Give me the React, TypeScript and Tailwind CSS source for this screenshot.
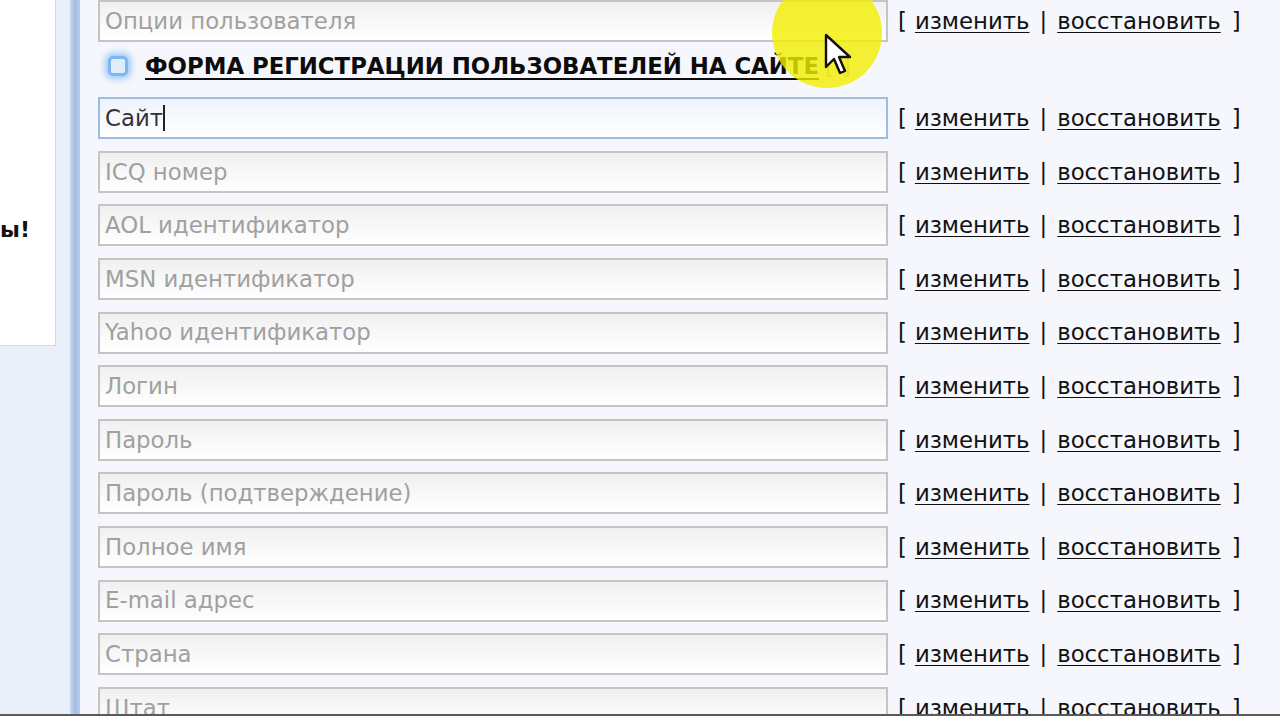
import React from 'react'

const fields = [
  'ICQ номер',
  'AOL идентификатор',
  'MSN идентификатор',
  'Yahoo идентификатор',
  'Логин',
  'Пароль',
  'Пароль (подтверждение)',
  'Полное имя',
  'E-mail адрес',
  'Страна',
  'Штат'
]

const font = { fontFamily: '"DejaVu Sans", Verdana, sans-serif' }

function Links() {
  return (
    <div className="ml-[10px] flex items-center text-[22.8px] text-[#111] whitespace-nowrap">
      <span>[</span>
      <a className="ml-[8px] underline decoration-1 underline-offset-[3px]">изменить</a>
      <span className="mx-[10px]">|</span>
      <a className="underline decoration-1 underline-offset-[3px]">восстановить</a>
      <span className="ml-[11px]">]</span>
    </div>
  )
}

function Field({ label, value, focused }: { label: string; value?: string; focused?: boolean }) {
  return (
    <div className="flex items-center h-[42px] shrink-0">
      <div
        className={
          focused
            ? 'w-[790px] h-[42px] border-2 border-[#9dbbe3] bg-gradient-to-b from-[#eef3fb] to-white flex items-center pl-[5px] text-[22.8px] text-[#333]'
            : 'w-[790px] h-[42px] border-2 border-[#c4c4c4] bg-gradient-to-b from-[#f0f0f0] to-white flex items-center pl-[5px] text-[22.8px] text-[#a0a0a0]'
        }
      >
        {value ? (
          <>
            <span>{value}</span>
            <span className="w-[2px] h-[26px] bg-[#222]" />
          </>
        ) : (
          <span>{label}</span>
        )}
      </div>
      <Links />
    </div>
  )
}

export default function App() {
  return (
    <div className="w-[1280px] h-[720px] overflow-hidden relative bg-white" style={font}>
      <div className="h-[716px] flex overflow-hidden border-b-2 border-[#5a5a5a]">
        <aside className="w-[70px] bg-[#e9f0fa] flex flex-col shrink-0">
          <div className="w-[56px] h-[346px] bg-white border-r border-b border-[#d3dae5] pt-[219px] text-[22px] font-bold text-[#111] leading-none whitespace-nowrap overflow-hidden">
            ы!
          </div>
        </aside>
        <div className="w-[10px] shrink-0 bg-gradient-to-r from-[#c9dbf1] via-[#9fbde3] to-[#b7cdea]" />
        <main className="flex-1 bg-[#f5f7fc] pl-[18px] flex flex-col gap-[11.6px]">
          <Field label="Опции пользователя" />
          <div className="h-[32px] flex items-center pl-[10px] pb-[8px] shrink-0">
            <span className="w-[20px] h-[20px] rounded-[5px] border-[3px] border-[#7fb6ef] bg-[#dfeefd] shadow-[0_0_6px_3px_rgba(120,180,245,0.7)]" />
            <span className="ml-[17px] text-[22.8px] font-bold text-[#0c0c0c] underline decoration-2 underline-offset-[4px] whitespace-nowrap">
              ФОРМА РЕГИСТРАЦИИ ПОЛЬЗОВАТЕЛЕЙ НА САЙТЕ
            </span>
            <span className="ml-[6px] text-[22.8px] text-[#b8b8b8]">[-]</span>
          </div>
          <Field label="Сайт" value="Сайт" focused />
          {fields.map(f => (
            <Field key={f} label={f} />
          ))}
        </main>
      </div>

      {/* cursor highlight */}
      <div className="absolute left-[772px] top-[-22px] w-[110px] h-[110px] rounded-full bg-[#f2ee00]/80 pointer-events-none" />
      <svg className="absolute left-[824px] top-[33px]" width="28" height="44" viewBox="0 0 14 22">
        <path d="M1 1 L1 17 L5 13 L8 20 L10.5 19 L7.5 12 L13 12 Z" fill="#fff" stroke="#111" strokeWidth="1.2" strokeLinejoin="round" />
      </svg>
    </div>
  )
}
